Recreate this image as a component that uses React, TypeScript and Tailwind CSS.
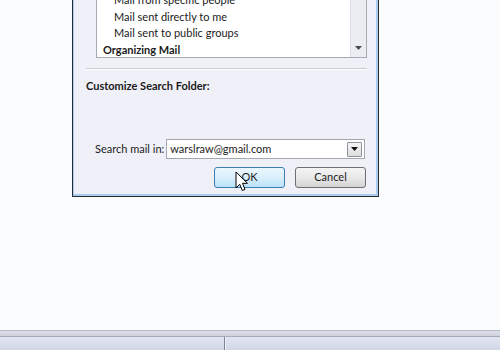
import React from "react";

const font = { fontFamily: 'Lato, "Open Sans", Arial, sans-serif' };

function Cursor() {
  return (
    <svg width="14" height="22" viewBox="0 0 14 22" className="absolute left-[235px] top-[171px]">
      <path
        d="M1 1 L1 17 L4.8 13.3 L7.3 19.5 L10 18.4 L7.5 12.3 L12.5 12.3 Z"
        fill="#ffffff"
        stroke="#000000"
        strokeWidth="1"
        strokeLinejoin="miter"
      />
    </svg>
  );
}

export default function App() {
  return (
    <div
      className="relative w-[500px] h-[350px] overflow-hidden bg-[#fbfcfe] flex flex-col text-[#1b1b1b] text-[11px]"
      style={font}
    >
      <div className="flex-1 min-h-0">
        {/* dialog */}
        <div className="ml-[72px] w-[307px] h-[197px] border-l border-r border-b border-[#2b2b2b] bg-[#a9cdf0] pl-[1px] pr-[2px] pb-[2px] flex flex-col">
          <div className="flex-1 bg-[#f0f0f8] flex flex-col">
            {/* list box */}
            <div className="ml-[22px] mr-[9px] h-[58px] flex border-l border-r border-b border-[#a7a9b3] bg-white">
              <div className="flex-1 flex flex-col -mt-[8px] leading-[16.5px]">
                <div className="h-[16.5px] pl-[17px]">Mail from specific people</div>
                <div className="h-[16.5px] pl-[17px]">Mail sent directly to me</div>
                <div className="h-[16.5px] pl-[17px]">Mail sent to public groups</div>
                <div className="h-[16.5px] pl-[6px] font-bold">Organizing Mail</div>
              </div>
              <div className="w-[16px] bg-[#ececf3] border-l border-[#dcdce4] flex flex-col justify-end items-center pb-[7px]">
                <svg width="7" height="4" viewBox="0 0 7 4">
                  <path d="M0 0 H7 L3.5 4 Z" fill="#4a4a4a" />
                </svg>
              </div>
            </div>
            {/* separator */}
            <div className="ml-[12px] mr-[9px] mt-[10px] h-[2px] border-t border-[#c9c9d1] border-b border-b-white" />
            <div className="ml-[12px] mt-[8px] font-bold leading-[16px]">Customize Search Folder:</div>
            {/* search row */}
            <div className="mt-[45px] ml-[21px] mr-[11px] flex items-center gap-[2px]">
              <span className="leading-[16px]">Search mail in:</span>
              <div className="flex-1 h-[20px] border border-[#a4a7b0] bg-white flex items-center pl-[3px] pr-[2px]">
                <span className="flex-1">warslraw@gmail.com</span>
                <div className="w-[15px] h-[15px] border border-[#8e929c] rounded-[1px] bg-gradient-to-b from-[#f7f7f7] to-[#dcdcdc] flex items-center justify-center">
                  <svg width="7" height="4" viewBox="0 0 7 4">
                    <path d="M0 0 H7 L3.5 4 Z" fill="#111" />
                  </svg>
                </div>
              </div>
            </div>
            {/* buttons */}
            <div className="mt-[8px] ml-[140px] flex gap-[10px]">
              <div className="w-[71px] h-[21px] rounded-[3px] border border-[#3c7fb1] bg-gradient-to-b from-[#ebf6fd] via-[#d9effc] to-[#b9e2fb] flex items-center justify-center">
                OK
              </div>
              <div className="w-[71px] h-[21px] rounded-[3px] border border-[#707070] bg-gradient-to-b from-[#f4f4f4] via-[#e9e9e9] to-[#d3d3d3] flex items-center justify-center">
                Cancel
              </div>
            </div>
          </div>
        </div>
      </div>
      {/* bottom bars */}
      <div className="h-[20px] flex flex-col">
        <div className="h-[1px] bg-[#b7bac4]" />
        <div className="h-[5px] bg-gradient-to-b from-[#dde0ea] to-[#cfd2de]" />
        <div className="h-[1px] bg-[#a7abb7]" />
        <div className="flex-1 flex bg-gradient-to-b from-[#e2e5f1] to-[#d2d7e7]">
          <div className="w-[224px]" />
          <div className="w-[1px] bg-[#7e838f]" />
          <div className="w-[1px] bg-[#eef0f6]" />
          <div className="flex-1" />
        </div>
      </div>
      <Cursor />
    </div>
  );
}
